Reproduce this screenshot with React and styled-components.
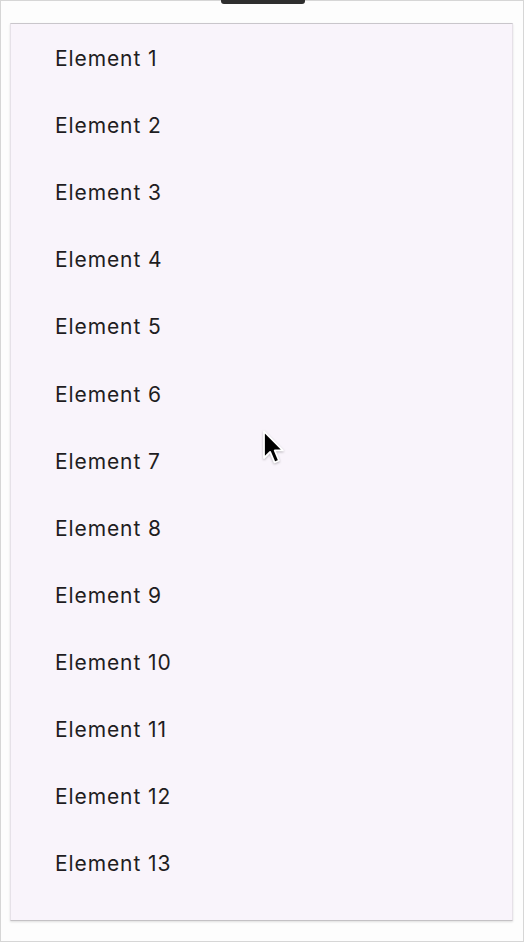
import React from "react";
import styled, { createGlobalStyle } from "styled-components";

const Global = createGlobalStyle`
  html, body {
    margin: 0;
    padding: 0;
    background: #ffffff;
  }
  * { box-sizing: border-box; }
`;

const Frame = styled.div`
  position: relative;
  width: 524px;
  height: 942px;
  border: 1px solid #d6d6d6;
  background: #fdfdfd;
  padding: 22px 10px 0 9px;
  font-family: Inter, "Noto Sans", Arial, sans-serif;
`;

const Notch = styled.div`
  position: absolute;
  top: -1px;
  left: 220px;
  width: 84px;
  height: 4px;
  border-radius: 0 0 3px 3px;
  background: #2e2e2e;
`;

const Card = styled.ul`
  list-style: none;
  margin: 0;
  height: 898px;
  padding: 1px 0 0;
  background: #f9f4fb;
  border: 1px solid #e6e1e8;
  border-top-color: #c9c6cb;
  border-bottom-color: #c4c2c5;
  box-shadow: 0 1px 2px rgba(0, 0, 0, 0.12);
`;

const Row = styled.li`
  height: 67.1px;
  display: flex;
  align-items: center;
  padding-left: 44px;
  font-size: 21px;
  letter-spacing: 0.9px;
  color: #1f1d22;
`;

const Cursor = styled.svg`
  position: absolute;
  left: 259px;
  top: 427px;
  filter: drop-shadow(0 1px 1px rgba(0, 0, 0, 0.25));
`;

export default function App() {
  const items = Array.from({ length: 13 }, (_, i) => `Element ${i + 1}`);
  return (
    <>
      <Global />
      <Frame>
        <Notch />
        <Card>
          {items.map((t) => (
            <Row key={t}>{t}</Row>
          ))}
        </Card>
        <Cursor width="28" height="40" viewBox="0 0 24 36">
          <path
            d="M3 3 L3 27 L8.5 21.5 L12.5 31 L16.5 29.3 L12.6 20.2 L20 20.2 Z"
            fill="#000"
            stroke="#fff"
            strokeWidth="1.6"
            strokeLinejoin="round"
          />
        </Cursor>
      </Frame>
    </>
  );
}
